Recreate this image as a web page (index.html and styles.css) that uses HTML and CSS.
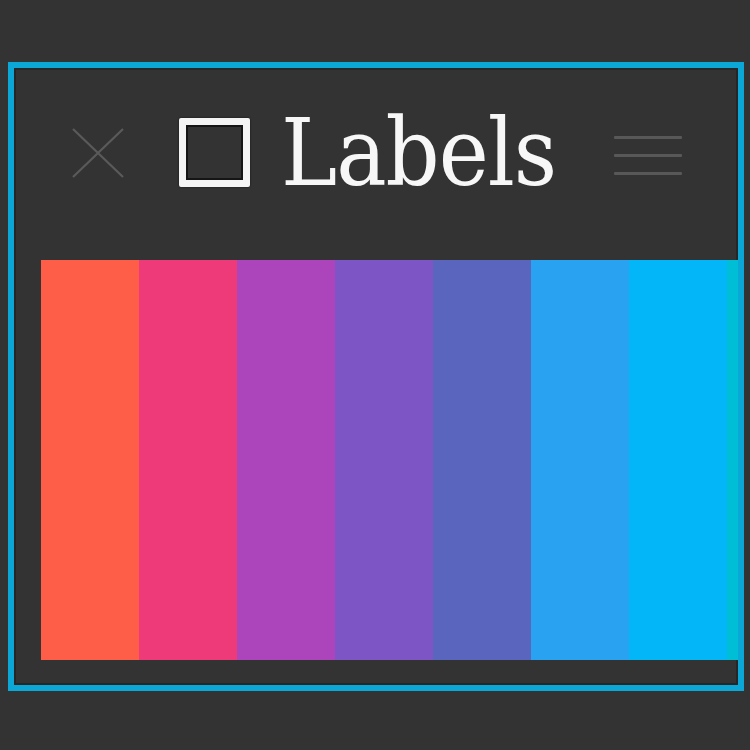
FILE: index.html
```html
<!DOCTYPE html>
<html lang="en">

<head>
    <meta charset="UTF-8">
    <meta name="viewport" content="width=device-width, initial-scale=1.0">
    <title>Labels</title>
    <link rel="stylesheet" href="styles.css">
</head>

<body>
    <div class="panel">
        <div class="head">
            <svg class="close" width="52" height="50" viewBox="0 0 52 50">
                <path d="M1 1 L51 49 M51 1 L1 49" stroke="#5a5a5a" stroke-width="2.2" fill="none" />
            </svg>
            <div class="check"></div>
            <div class="title">Labels</div>
            <div class="menu">
                <span></span>
                <span></span>
                <span></span>
            </div>
        </div>
        <div class="colors">
            <div class="c c1"></div>
            <div class="c c2"></div>
            <div class="c c3"></div>
            <div class="c c4"></div>
            <div class="c c5"></div>
            <div class="c c6"></div>
            <div class="c c7"></div>
            <div class="c c8"></div>
        </div>
    </div>
</body>

</html>
```

FILE: styles.css
```css
* {
    margin: 0px;
    padding: 0px;
    box-sizing: border-box;
}

html {
    background: #333333;
}

body {
    margin: 0px;
    padding: 62px 6px 0px 8px;
    background: #333333;
    font-family: "DejaVu Serif Condensed", "DejaVu Serif", serif;
}

.panel {
    width: 736px;
    height: 629px;
    border: 6px solid #0aa7d7;
    background: #333333;
    box-shadow: inset 0px 0px 0px 2px #262626;
    overflow: hidden;
}

.head {
    height: 169px;
    display: flex;
    align-items: center;
}

.head .close {
    margin-left: 58px;
    flex-shrink: 0;
}

.head .check {
    width: 71px;
    height: 69px;
    margin-left: 55px;
    border: 7px solid #f4f4f4;
    box-shadow: inset 0px 0px 0px 2px #151515, 0px 0px 2px #111;
    border-radius: 2px;
    flex-shrink: 0;
}

.head .title {
    margin-left: 31px;
    font-size: 94px;
    line-height: 1;
    color: #f7f7f7;
    letter-spacing: -1px;
}

.head .menu {
    margin-left: auto;
    margin-right: 56px;
    width: 68px;
    display: flex;
    flex-direction: column;
    gap: 15px;
    margin-top: 6px;
}

.head .menu span {
    display: block;
    height: 3px;
    background: #585858;
    border-radius: 1px;
}

.colors {
    margin-top: 23px;
    margin-left: 27px;
    height: 400px;
    display: flex;
}

.colors .c {
    width: 98px;
    height: 100%;
    flex-shrink: 0;
}

.c1 { background: #fe5d47; }
.c2 { background: #ee3a78; }
.c3 { background: #ac45bc; }
.c4 { background: #7e55c4; }
.c5 { background: #5a66be; }
.c6 { background: #2aa2f2; }
.c7 { background: #03b6f8; }
.c8 { background: #00bed6; }
```
